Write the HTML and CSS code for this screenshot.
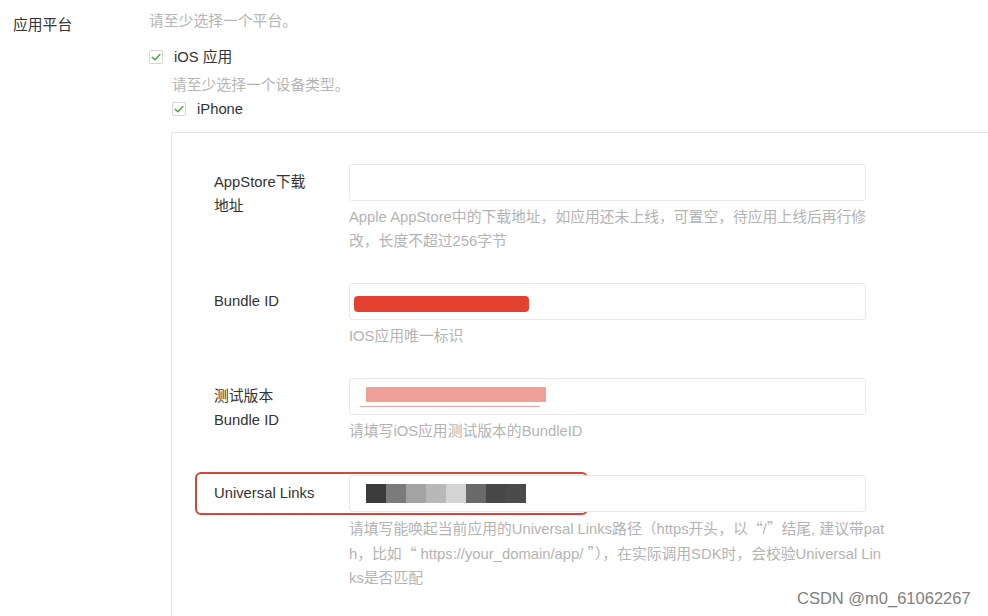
FILE: index.html
```html
<!DOCTYPE html>
<html lang="zh-CN">
<head>
<meta charset="utf-8">
<title>应用平台</title>
<link rel="stylesheet" href="styles.css">
</head>
<body>
<div class="page">
  <div class="field">
    <div class="field-label">应用平台</div>
    <div class="field-body">
      <div class="hint hint-top">请至少选择一个平台。</div>
      <div class="check check-ios">
        <span class="box"><svg viewBox="0 0 14 14" width="14" height="14"><path d="M3.2 7.2 L5.9 9.8 L10.9 4.6" fill="none" stroke="#47a443" stroke-width="1.5" stroke-linecap="round" stroke-linejoin="round"/></svg></span>
        <span>iOS 应用</span>
      </div>
      <div class="sub">
        <div class="hint hint-sub">请至少选择一个设备类型。</div>
        <div class="check check-iphone">
          <span class="box"><svg viewBox="0 0 14 14" width="14" height="14"><path d="M3.2 7.2 L5.9 9.8 L10.9 4.6" fill="none" stroke="#47a443" stroke-width="1.5" stroke-linecap="round" stroke-linejoin="round"/></svg></span>
          <span>iPhone</span>
        </div>
        <div class="panel">
          <div class="row">
            <div class="row-label">AppStore下载<br>地址</div>
            <div class="row-body">
              <div class="input"></div>
              <div class="help">Apple AppStore中的下载地址，如应用还未上线，可置空，待应用上线后再行修<br>改，长度不超过256字节</div>
            </div>
          </div>
          <div class="row">
            <div class="row-label">Bundle ID</div>
            <div class="row-body">
              <div class="input"><span class="mask-red"></span></div>
              <div class="help">IOS应用唯一标识</div>
            </div>
          </div>
          <div class="row">
            <div class="row-label">测试版本<br>Bundle ID</div>
            <div class="row-body">
              <div class="input input-pink"><span class="mask-pink"></span><span class="mask-line"></span></div>
              <div class="help">请填写iOS应用测试版本的BundleID</div>
            </div>
          </div>
          <div class="row row-marked">
            <div class="mark"></div>
            <div class="row-label">Universal Links</div>
            <div class="row-body">
              <div class="input input-pixel">
                <span class="px px1"></span><span class="px px2"></span><span class="px px3"></span><span class="px px4"></span><span class="px px5"></span><span class="px px6"></span><span class="px px7"></span><span class="px px8"></span>
              </div>
              <div class="help">请填写能唤起当前应用的Universal Links路径（https开头，以<span class="q">“</span>/<span class="q">”</span>结尾, 建议带pat<br>h，比如<span class="q">“</span> https://your_domain/app/ <span class="q">”</span>），在实际调用SDK时，会校验Universal Lin<br>ks是否匹配</div>
            </div>
          </div>
        </div>
      </div>
    </div>
  </div>
  <div class="watermark">CSDN @m0_61062267</div>
</div>
</body>
</html>
```
FILE: styles.css
```css
html, body {
  margin: 0;
  padding: 0;
  background: #ffffff;
}
body {
  font-family: "Liberation Sans", "Noto Sans CJK SC", sans-serif;
  font-size: 14.8px;
  color: #333333;
}
.page {
  position: relative;
  width: 988px;
  height: 616px;
  overflow: hidden;
}
.field {
  display: flex;
  padding-left: 13px;
}
.field-label {
  width: 136px;
  flex: none;
  padding-top: 13px;
  line-height: 24px;
}
.field-body {
  flex: 1;
}
.hint {
  color: #b5b5b5;
  line-height: 24px;
}
.hint-top {
  margin-top: 9px;
}
.check {
  display: flex;
  align-items: center;
  height: 24px;
  line-height: 24px;
}
.check-ios {
  margin-top: 12px;
}
.box {
  width: 14px;
  height: 14px;
  box-sizing: border-box;
  border: 1px solid #d6d6d6;
  border-radius: 2px;
  background: #fff;
  margin-right: 11px;
  position: relative;
  flex: none;
}
.box svg {
  position: absolute;
  left: -1px;
  top: -1px;
}
.sub {
  padding-left: 23px;
}
.hint-sub {
  margin-top: 5px;
  line-height: 22px;
}
.check-iphone {
  margin-top: 1px;
}
.panel {
  margin-top: 11px;
  margin-left: -1px;
  width: 900px;
  border-top: 1px solid #e6e6e6;
  border-left: 1px solid #e6e6e6;
  padding: 31px 0 60px 42px;
}
.row {
  position: relative;
  display: grid;
  grid-template-columns: 135px 517px;
  margin-bottom: 30px;
}
.row-marked {
  margin-top: 32px;
}
.row-label {
  padding-top: 6px;
  line-height: 24px;
}
.input {
  position: relative;
  height: 37px;
  box-sizing: border-box;
  border: 1px solid #e9e9e9;
  border-radius: 3px;
  background: #fff;
}
.help {
  margin-top: 4px;
  line-height: 24px;
  color: #b3b3b3;
  white-space: nowrap;
}
.q {
  font-family: "Noto Sans CJK SC", sans-serif;
}
.mask-red {
  position: absolute;
  left: 4px;
  top: 12px;
  width: 175px;
  height: 16px;
  border-radius: 4px;
  background: #e2412f;
}
.mask-pink {
  position: absolute;
  left: 16px;
  top: 8px;
  width: 180px;
  height: 15px;
  background: #f0a197;
  border-radius: 1px;
}
.mask-line {
  position: absolute;
  left: 10px;
  top: 27px;
  width: 180px;
  height: 1px;
  background: #e7a3a0;
}
.input-pixel {
  display: flex;
  align-items: center;
  padding-left: 16px;
}
.px {
  width: 20px;
  height: 19px;
  flex: none;
}
.px1 { background: #3c3c3c; }
.px2 { background: #7b7b7b; }
.px3 { background: #a3a3a3; }
.px4 { background: #b8b8b8; }
.px5 { background: #d4d4d4; }
.px6 { background: #6a6a6a; }
.px7 { background: #474747; }
.px8 { background: #4b4b4b; }
.mark {
  position: absolute;
  left: -19px;
  top: -3px;
  width: 393px;
  height: 43px;
  box-sizing: border-box;
  border: 2px solid #d64535;
  border-radius: 6px;
  pointer-events: none;
}
.watermark {
  position: absolute;
  left: 797px;
  top: 587px;
  font-size: 16.5px;
  line-height: 22px;
  color: #808080;
  white-space: nowrap;
}
```
